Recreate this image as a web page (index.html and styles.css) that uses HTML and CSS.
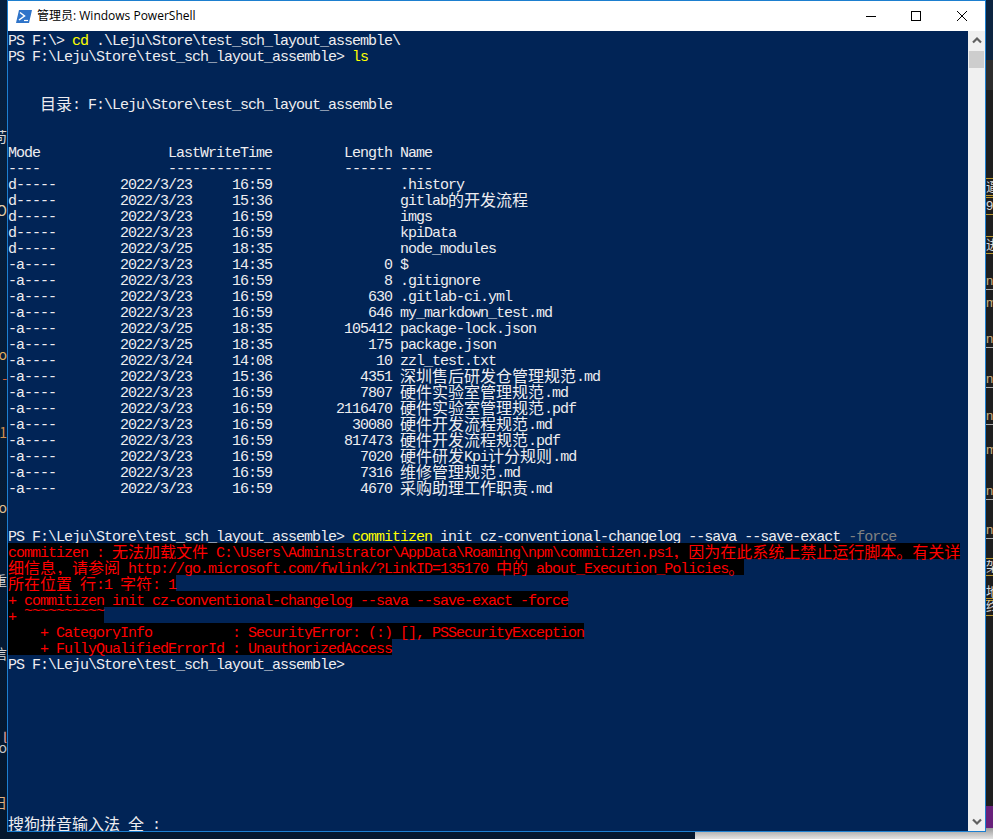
FILE: index.html
```html
<!DOCTYPE html>
<html lang="zh-CN">
<head>
<meta charset="utf-8">
<title>管理员: Windows PowerShell</title>
<link rel="stylesheet" href="styles.css">
</head>
<body>
<div class="desktop">
  <div class="bits-left">
    <span class="bit b1">苟</span><span class="bit b2">O</span><span class="bit b3">o</span><span class="bit b4">-</span><span class="bit b5">1</span><span class="bit b6">o</span><span class="bit b7">重</span><span class="bit b8">信</span><span class="bit b9">l</span><span class="bit b10">o</span><span class="bit b11">日</span>
  </div>
  <div class="right-strip">
    <div class="rs-top"></div>
    <div class="rs-band"></div>
    <div class="rs-mid"></div>
    <div class="rs-purple"></div>
    <div class="rs-gray"></div>
  </div>
  <div class="right-bits">
    <span class="rb gold r1">逼</span><span class="rb gold r2">9</span><span class="rb gold r3">进</span>
    <span class="rb tan r4">n</span><span class="rb tan r5">m</span><span class="rb tan r6">n</span><span class="rb tan r7">n</span><span class="rb tan r8">n</span><span class="rb tan r9">m</span><span class="rb tan r10">n</span><span class="rb tan r11">n</span>
    <span class="rb gold r12">架</span><span class="rb gold r13">地</span><span class="rb gold r14">终</span>
  </div>
  <div class="bottom-strip"></div>
  <div class="window">
    <div class="titlebar">
      <svg class="ps-icon" viewBox="0 0 16 13" width="16" height="13"><path d="M3 0H16L13 13H0Z" fill="#2f74c9"/><path d="M4 2.5 8.5 6 3 10" fill="none" stroke="#fff" stroke-width="1.5"/><path d="M8 10.5H12" stroke="#fff" stroke-width="1.2"/></svg>
      <span class="title">管理员: Windows PowerShell</span>
      <div class="controls">
        <svg class="ctl" viewBox="0 0 46 30" width="46" height="30"><path d="M19 15.5H29" stroke="#000"/></svg>
        <svg class="ctl" viewBox="0 0 46 30" width="46" height="30"><rect x="18.5" y="10.5" width="9" height="9" fill="none" stroke="#000"/></svg>
        <svg class="ctl" viewBox="0 0 46 30" width="46" height="30"><path d="M18 10 28 20M28 10 18 20" stroke="#000" fill="none"/></svg>
      </div>
    </div>
    <div class="client">
      <div class="console">
<div class="row">PS F:\&gt; <span class="y">cd</span> .\Leju\Store\test_sch_layout_assemble\</div>
<div class="row">PS F:\Leju\Store\test_sch_layout_assemble&gt; <span class="y">ls</span></div>
<div class="row"></div>
<div class="row"></div>
<div class="row">    <span class="z">目录</span>: F:\Leju\Store\test_sch_layout_assemble</div>
<div class="row"></div>
<div class="row"></div>
<div class="row">Mode                LastWriteTime         Length Name</div>
<div class="row">----                -------------         ------ ----</div>
<div class="row">d-----        2022/3/23     16:59                .history</div>
<div class="row">d-----        2022/3/23     15:36                gitlab<span class="z">的开发流程</span></div>
<div class="row">d-----        2022/3/23     16:59                imgs</div>
<div class="row">d-----        2022/3/23     16:59                kpiData</div>
<div class="row">d-----        2022/3/25     18:35                node_modules</div>
<div class="row">-a----        2022/3/23     14:35              0 $</div>
<div class="row">-a----        2022/3/23     16:59              8 .gitignore</div>
<div class="row">-a----        2022/3/23     16:59            630 .gitlab-ci.yml</div>
<div class="row">-a----        2022/3/23     16:59            646 my_markdown_test.md</div>
<div class="row">-a----        2022/3/25     18:35         105412 package-lock.json</div>
<div class="row">-a----        2022/3/25     18:35            175 package.json</div>
<div class="row">-a----        2022/3/24     14:08             10 zzl_test.txt</div>
<div class="row">-a----        2022/3/23     15:36           4351 <span class="z">深圳售后研发仓管理规范</span>.md</div>
<div class="row">-a----        2022/3/23     16:59           7807 <span class="z">硬件实验室管理规范</span>.md</div>
<div class="row">-a----        2022/3/23     16:59        2116470 <span class="z">硬件实验室管理规范</span>.pdf</div>
<div class="row">-a----        2022/3/23     16:59          30080 <span class="z">硬件开发流程规范</span>.md</div>
<div class="row">-a----        2022/3/23     16:59         817473 <span class="z">硬件开发流程规范</span>.pdf</div>
<div class="row">-a----        2022/3/23     16:59           7020 <span class="z">硬件研发</span>Kpi<span class="z">计分规则</span>.md</div>
<div class="row">-a----        2022/3/23     16:59           7316 <span class="z">维修管理规范</span>.md</div>
<div class="row">-a----        2022/3/23     16:59           4670 <span class="z">采购助理工作职责</span>.md</div>
<div class="row"></div>
<div class="row"></div>
<div class="row">PS F:\Leju\Store\test_sch_layout_assemble&gt; <span class="y">commitizen</span> init cz-conventional-changelog --sava --save-exact <span class="g">-force</span></div>
<div class="row"><span class="err">commitizen : <span class="z">无法加载文件</span> C:\Users\Administrator\AppData\Roaming\npm\commitizen.ps1<span class="z">，因为在此系统上禁止运行脚本。有关详</span></span></div>
<div class="row"><span class="err"><span class="z">细信息，请参阅</span> http://go.microsoft.com/fwlink/?LinkID=135170 <span class="z">中的</span> about_Execution_Policies<span class="z">。</span></span></div>
<div class="row"><span class="err"><span class="z">所在位置</span> <span class="z">行</span>:1 <span class="z">字符</span>: 1</span></div>
<div class="row"><span class="err">+ commitizen init cz-conventional-changelog --sava --save-exact -force</span></div>
<div class="row"><span class="err">+ <span class="tilde">~~~~~~~~~~</span></span></div>
<div class="row"><span class="err">    + CategoryInfo          : SecurityError: (:) [], PSSecurityException</span></div>
<div class="row"><span class="err">    + FullyQualifiedErrorId : UnauthorizedAccess</span></div>
<div class="row">PS F:\Leju\Store\test_sch_layout_assemble&gt;</div>
<div class="row"></div><div class="row"></div><div class="row"></div><div class="row"></div><div class="row"></div><div class="row"></div><div class="row"></div><div class="row"></div><div class="row"></div>
<div class="row"><span class="z">搜狗拼音输入法</span> <span class="z">全</span> :</div>
      </div>
      <div class="scrollbar">
        <svg class="arrow" viewBox="0 0 17 20" width="17" height="20"><path d="M5 11.5 9 7.5 13 11.5" fill="none" stroke="#606060" stroke-width="2.2"/></svg>
        <div class="thumb"></div>
        <div class="track"></div>
        <svg class="arrow" viewBox="0 0 17 20" width="17" height="20"><path d="M5 8.5 9 12.5 13 8.5" fill="none" stroke="#606060" stroke-width="2.2"/></svg>
      </div>
    </div>
  </div>
</div>
</body>
</html>
```

FILE: styles.css
```css
html, body { margin: 0; padding: 0; }
body { width: 993px; height: 839px; overflow: hidden; background: #061a33; }
.desktop { position: relative; width: 993px; height: 839px; overflow: hidden; background: linear-gradient(#062040, #04172e); }

.window {
  position: absolute; left: 7px; top: 0; width: 979px; height: 832px;
  box-sizing: border-box; border: 1px solid #1d7fcf; background: #fff;
  display: flex; flex-direction: column;
}
.titlebar { height: 30px; flex: none; display: flex; align-items: center; background: #fff; padding-left: 8px; }
.ps-icon { flex: none; }
.title { margin-left: 5px; font: 12px/16px "Open Sans", "Noto Sans CJK SC", sans-serif; color: #000; }
.controls { margin-left: auto; display: flex; }
.ctl { display: block; }

.client { flex: 1; display: flex; min-height: 0; }
.console { flex: none; width: 960px; background: #012456; color: #eeedf0; font: 15px/22px "Liberation Mono", monospace; letter-spacing: -1px; overflow: hidden; }
.row { height: 16px; white-space: pre; }
.z { font-family: "Noto Sans CJK SC", sans-serif; font-size: 16px; letter-spacing: 0; line-height: 0; vertical-align: -1px; }
.y { color: #ffff00; }
.g { color: #808080; }
.err { color: #ff0000; background: #000; display: inline-block; height: 16px; vertical-align: top; }
.tilde { vertical-align: 6px; line-height: 0; }

.scrollbar { flex: 1; display: flex; flex-direction: column; background: #f0f0f0; }
.arrow { flex: none; display: block; }
.thumb { flex: none; height: 17px; margin: 0 1px; background: #cdcdcd; }
.track { flex: 1; }

.bit { position: absolute; left: 0; width: 7px; font: 14px/16px "Noto Sans CJK SC", sans-serif; color: #d9d9d9; overflow: hidden; white-space: nowrap; direction: rtl; }
.b1 { top: 128px; }
.b2 { top: 202px; color: #e8d0a8; }
.b3 { top: 346px; color: #e0b060; }
.b4 { top: 369px; color: #d0603a; }
.b5 { top: 424px; color: #d09050; }
.b6 { top: 499px; color: #e0c090; }
.b7 { top: 572px; }
.b8 { top: 645px; }
.b9 { top: 729px; color: #e8a0a0; }
.b10 { top: 739px; color: #c8c8c8; }
.b11 { top: 794px; color: #e0b080; }

.right-strip { position: absolute; left: 986px; top: 0; width: 7px; height: 839px; display: flex; flex-direction: column; background: #1e1e1e; }
.rs-top { height: 60px; flex: none; background: #0c2440; }
.rs-band { height: 30px; flex: none; background: #2d2d2d; }
.rs-mid { flex: 1; background: #1e1e1e; }
.rs-purple { height: 22px; flex: none; background: #68217a; }
.rs-gray { height: 11px; flex: none; background: #d8d8d8; }

.rb { position: absolute; left: 986px; width: 7px; overflow: hidden; white-space: nowrap; font: 13px/16px "Liberation Sans", "Noto Sans CJK SC", sans-serif; }
.gold { color: #d8d8d8; border-top: 1px solid #b8962e; border-bottom: 1px solid #b8962e; }
.tan { color: #c8b080; border-bottom: 1px solid #aaaaaa; }
.r1 { top: 178px; }
.r2 { top: 197px; }
.r3 { top: 236px; }
.r4 { top: 273px; }
.r5 { top: 295px; border-bottom: 0; }
.r6 { top: 331px; }
.r7 { top: 371px; }
.r8 { top: 408px; }
.r9 { top: 442px; border-bottom: 0; }
.r10 { top: 483px; }
.r11 { top: 522px; }
.r12 { top: 558px; }
.r13 { top: 584px; border-top: 0; }
.r14 { top: 598px; }

.bottom-strip { position: absolute; left: 695px; top: 828px; width: 298px; height: 11px; background: linear-gradient(#9a9a9a, #e4e4e4); }
```
